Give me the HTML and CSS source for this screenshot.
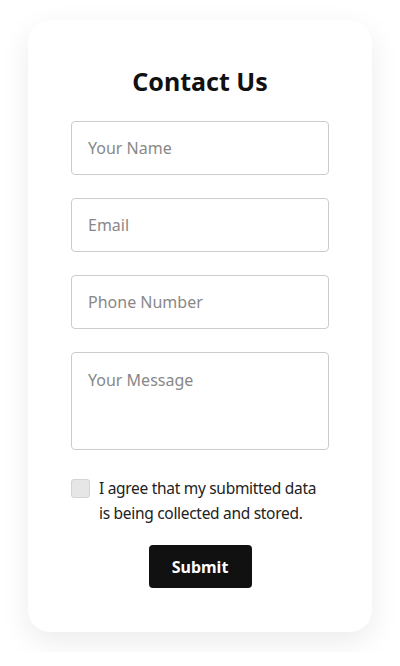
FILE: index.html
```html
<!DOCTYPE html>
<html lang="en">
<head>
    <meta charset="UTF-8">
    <meta name="viewport" content="width=device-width, initial-scale=1.0">
    <title>Contact Us</title>
    <link rel="stylesheet" href="styles.css">
</head>
<body>
    <div class="card">
        <h1>Contact Us</h1>
        <form class="contact-form">
            <input type="text" placeholder="Your Name">
            <input type="email" placeholder="Email">
            <input type="tel" placeholder="Phone Number">
            <textarea placeholder="Your Message"></textarea>
            <label class="agree">
                <span class="box"></span>
                <span>I agree that my submitted data is being collected and stored.</span>
            </label>
            <button type="button">Submit</button>
        </form>
    </div>
</body>
</html>
```

FILE: styles.css
```css
* {
    margin: 0;
    padding: 0;
    box-sizing: border-box;
}

body {
    font-family: 'Noto Sans', sans-serif;
    background-color: #fff;
    color: #222;
    padding: 20px 28px;
}

.card {
    background-color: #fff;
    border-radius: 22px;
    padding: 46px 43px 44px;
    box-shadow: 0 10px 30px rgba(0, 0, 0, 0.08);
}

h1 {
    font-size: 25px;
    line-height: 31px;
    font-weight: 700;
    text-align: center;
    color: #111;
    margin-bottom: 24px;
}

.contact-form {
    display: flex;
    flex-direction: column;
    gap: 23px;
}

.contact-form input,
.contact-form textarea {
    width: 100%;
    height: 54px;
    padding: 0 16px;
    font-family: inherit;
    font-size: 16px;
    color: #222;
    border: 1px solid #ccc;
    border-radius: 4px;
    outline: none;
    resize: none;
}

.contact-form textarea {
    height: 98px;
    padding-top: 16px;
    line-height: 22px;
}

.contact-form ::placeholder {
    color: #888;
}

.agree {
    display: flex;
    gap: 9px;
    margin-top: 3px;
    font-size: 15.5px;
    letter-spacing: -0.3px;
    line-height: 25px;
    color: #222;
}

.agree .box {
    flex: none;
    width: 19px;
    height: 19px;
    margin-top: 3px;
    background-color: #e6e6e6;
    border: 1px solid #d4d4d4;
    border-radius: 3px;
}

button {
    align-self: center;
    width: 103px;
    height: 43px;
    margin-top: -4px;
    font-family: inherit;
    font-size: 16px;
    font-weight: 700;
    background-color: #111;
    color: #fff;
    border: none;
    border-radius: 4px;
    cursor: pointer;
}
```
